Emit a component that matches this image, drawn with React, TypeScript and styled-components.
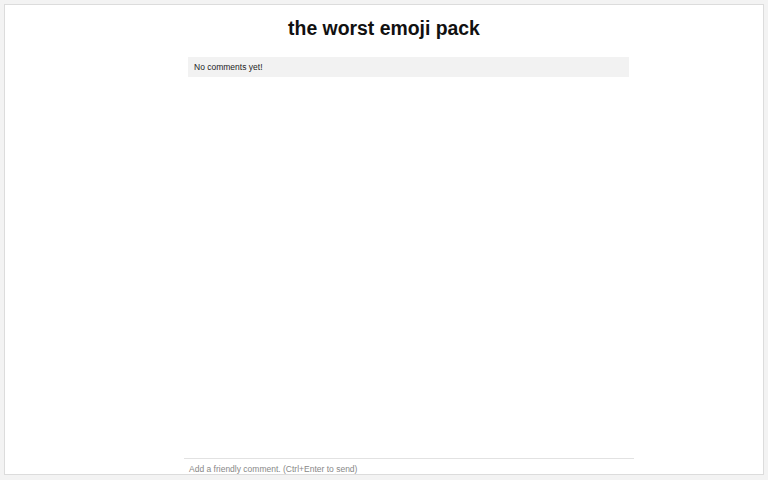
import React, { useState } from 'react';
import styled, { createGlobalStyle } from 'styled-components';

const GlobalStyle = createGlobalStyle`
  html, body {
    margin: 0;
    padding: 0;
    background: #f3f3f3;
    font-family: "Liberation Sans", Arial, sans-serif;
  }
`;

const Page = styled.div`
  box-sizing: border-box;
  height: 480px;
  padding: 4px 4px 5px 4px;
`;

const Panel = styled.div`
  box-sizing: border-box;
  height: 100%;
  background: #ffffff;
  border: 1px solid #dcdcdc;
  display: flex;
  flex-direction: column;
`;

const Title = styled.h1`
  margin: 0;
  padding-top: 12px;
  height: 45px;
  box-sizing: border-box;
  text-align: center;
  font-size: 19.4px;
  font-weight: bold;
  color: #111;
`;

const Column = styled.div`
  flex: 1;
  display: flex;
  flex-direction: column;
  width: 450px;
  margin-left: 179px;
  min-height: 0;
`;

const Comments = styled.div`
  flex: 1;
  padding: 7px 5px 0 4px;
`;

const EmptyNote = styled.div`
  background: #f2f2f2;
  padding: 5px 6px;
  font-size: 8.5px;
  color: #222;
  line-height: 10px;
`;

const CommentInput = styled.textarea`
  box-sizing: border-box;
  border: none;
  border-top: 1px solid #e2e2e2;
  outline: none;
  resize: none;
  height: 16px;
  padding: 5px 5px 0 5px;
  font-family: "Liberation Sans", Arial, sans-serif;
  font-size: 8.5px;
  line-height: 10px;
  color: #333;
  overflow: hidden;

  &::placeholder {
    color: #888;
  }
`;

const App = () => {
  const [text, setText] = useState("");

  return (
    <>
      <GlobalStyle />
      <Page>
        <Panel>
          <Title>the worst emoji pack</Title>
          <Column>
            <Comments>
              <EmptyNote>No comments yet!</EmptyNote>
            </Comments>
            <CommentInput
              value={text}
              onChange={(e) => setText(e.target.value)}
              placeholder="Add a friendly comment. (Ctrl+Enter to send)"
            />
          </Column>
        </Panel>
      </Page>
    </>
  );
};

export default App;
